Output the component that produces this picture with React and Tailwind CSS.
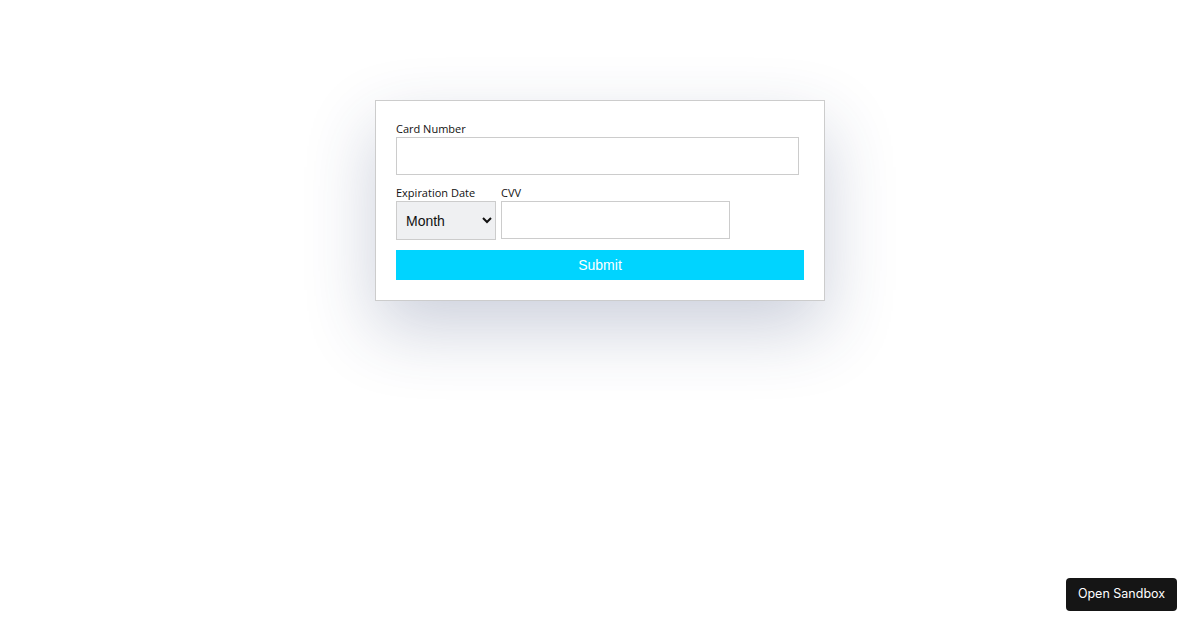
export default function App() {
  return (
    <div className="relative h-[630px] w-[1200px] bg-white overflow-hidden">
      <div className="flex justify-center pt-[100px]">
        <form className="w-[450px] border border-[#cccccc] bg-white p-5 shadow-[0_28px_70px_rgba(40,60,110,0.24)]">
          <label className="block h-4 text-[11px] leading-4 text-[#111] font-['Open_Sans',sans-serif]">
            Card Number
          </label>
          <input
            type="text"
            className="block h-[38px] w-[403px] border border-[#cccccc] bg-white"
          />
          <div className="mt-[10px] flex gap-[5px]">
            <div className="flex flex-col">
              <label className="h-4 text-[11px] leading-4 text-[#111] font-['Open_Sans',sans-serif]">
                Expiration Date
              </label>
              <select className="h-[39px] w-[100px] border border-[#cccccc] bg-[#eff0f2] pl-[5px] text-[14px] text-[#111] font-['Liberation_Sans',sans-serif]">
                <option>Month</option>
              </select>
            </div>
            <div className="flex flex-col">
              <label className="h-4 text-[11px] leading-4 text-[#111] font-['Open_Sans',sans-serif]">
                CVV
              </label>
              <input
                type="text"
                className="h-[38px] w-[229px] border border-[#cccccc] bg-white"
              />
            </div>
          </div>
          <button
            type="button"
            className="mt-[10px] block h-[30px] w-full bg-[#00d4ff] text-[14px] text-white font-['Liberation_Sans',sans-serif]"
          >
            Submit
          </button>
        </form>
      </div>
      <button className="absolute bottom-[19px] right-[23px] h-[33px] w-[111px] rounded-[4px] bg-[#151515] text-[12.5px] text-white font-['Inter',sans-serif]">
        Open Sandbox
      </button>
    </div>
  );
}
